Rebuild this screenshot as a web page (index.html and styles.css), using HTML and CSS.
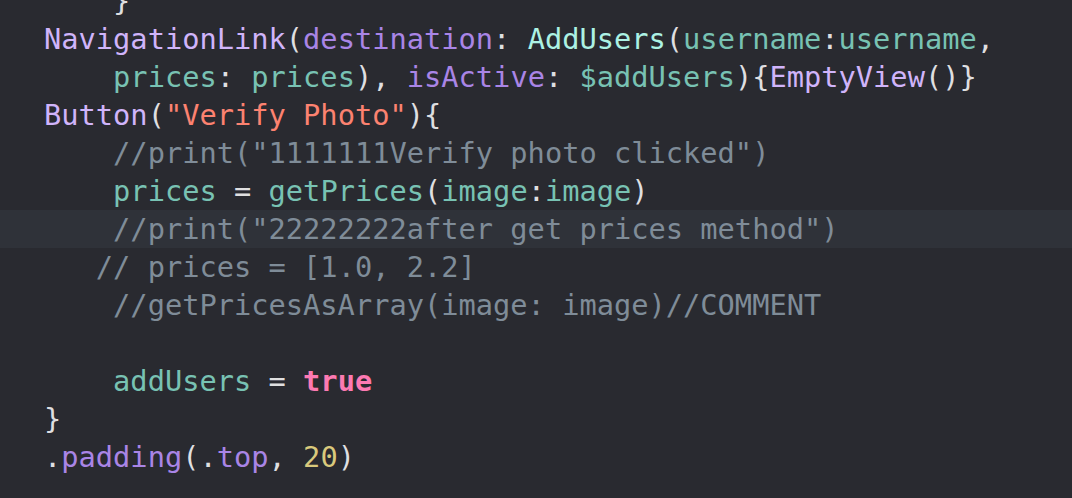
FILE: index.html
```html
<!DOCTYPE html>
<html>
<head>
<meta charset="utf-8">
<link rel="stylesheet" href="styles.css">
</head>
<body>
<div class="editor">
<div class="line">    <span class="p">}</span></div>
<div class="line"><span class="ct">NavigationLink</span><span class="p">(</span><span class="fn">destination</span><span class="p">: </span><span class="pc">AddUsers</span><span class="p">(</span><span class="pf">username</span><span class="p">:</span><span class="pf">username</span><span class="p">,</span></div>
<div class="line">    <span class="pf">prices</span><span class="p">: </span><span class="pf">prices</span><span class="p">), </span><span class="fn">isActive</span><span class="p">: </span><span class="pf">$addUsers</span><span class="p">){</span><span class="ct">EmptyView</span><span class="p">()}</span></div>
<div class="line"><span class="ct">Button</span><span class="p">(</span><span class="str">"Verify Photo"</span><span class="p">){</span></div>
<div class="line">    <span class="cm">//print("1111111Verify photo clicked")</span></div>
<div class="line">    <span class="pf">prices</span><span class="p"> = </span><span class="pf">getPrices</span><span class="p">(</span><span class="pf">image</span><span class="p">:</span><span class="pf">image</span><span class="p">)</span></div>
<div class="line current">    <span class="cm">//print("22222222after get prices method")</span></div>
<div class="line">   <span class="cm">// prices = [1.0, 2.2]</span></div>
<div class="line">    <span class="cm">//getPricesAsArray(image: image)//COMMENT</span></div>
<div class="line"> </div>
<div class="line">    <span class="pf">addUsers</span><span class="p"> = </span><span class="kw">true</span></div>
<div class="line"><span class="p">}</span></div>
<div class="line"><span class="p">.</span><span class="fn">padding</span><span class="p">(.</span><span class="fn">top</span><span class="p">, </span><span class="num">20</span><span class="p">)</span></div>
</div>
</body>
</html>
```

FILE: styles.css
```css
html, body {
  margin: 0;
  padding: 0;
  background: #292a30;
  width: 1072px;
  height: 498px;
  overflow: hidden;
}

.editor {
  margin-top: -18px;
  font-family: "DejaVu Sans Mono", "Liberation Mono", monospace;
  font-size: 28.7px;
  color: #dfdfe0;
}

.line {
  height: 38px;
  line-height: 38px;
  padding-left: 44px;
  white-space: pre;
}

.line.current {
  background: #2f3239;
}

.p { color: #dfdfe0; }
.ct { color: #d0b4fa; }
.fn { color: #a985e6; }
.pc { color: #acf2e4; }
.pf { color: #78c2b3; }
.str { color: #fc8270; }
.cm { color: #7f8c98; }
.kw { color: #fc7ab2; font-weight: bold; }
.num { color: #d9c97c; }
```
